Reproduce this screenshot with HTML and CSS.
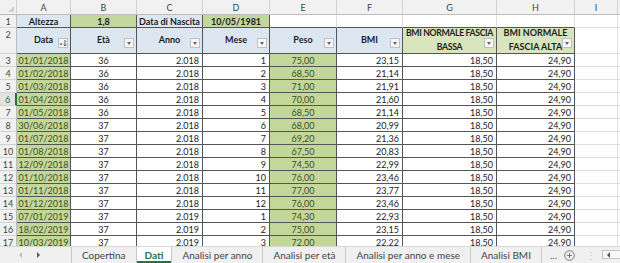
FILE: index.html
```html
<!DOCTYPE html>
<html lang="it">
<head>
<meta charset="utf-8">
<title>Dati</title>
<link rel="stylesheet" href="styles.css">
</head>
<body>
<div class="app">
  <div class="sheet">
    <div class="grid">
      <div class="ch corner"></div><div class="ch">A</div><div class="ch">B</div><div class="ch">C</div><div class="ch">D</div><div class="ch">E</div><div class="ch">F</div><div class="ch">G</div><div class="ch">H</div><div class="ch">I</div><div class="ch"></div>

      <div class="rh">1</div><div class="t bl b c">Altezza</div><div class="t gf b c">1,8</div><div class="t bl b c">Data di Nascita</div><div class="t gf b c">10/05/1981</div><div class="e db"></div><div class="e db"></div><div class="e db"></div><div class="e db"></div><div class="e"></div><div class="e"></div>

      <div class="rh">2</div>
      <div class="t bl hd">Data<span class="fb"><svg width="8" height="8" viewBox="0 0 8 8"><path d="M0.5 4.5h3l-1.5 2z" fill="#555"/><path d="M6 1v6M4.6 5.4L6 7l1.4-1.6" stroke="#555" stroke-width="1" fill="none"/></svg></span></div>
      <div class="t bl hd">Età<span class="fb"><i class="tri"></i></span></div>
      <div class="t bl hd">Anno<span class="fb"><i class="tri"></i></span></div>
      <div class="t bl hd">Mese<span class="fb"><i class="tri"></i></span></div>
      <div class="t bl hd">Peso<span class="fb"><i class="tri"></i></span></div>
      <div class="t bl hd">BMI<span class="fb"><i class="tri"></i></span></div>
      <div class="t lg hd tight">BMI NORMALE FASCIA<br>BASSA<span class="fb"><i class="tri"></i></span></div>
      <div class="t lg hd">BMI NORMALE<br>FASCIA ALTA<span class="fb"><i class="tri"></i></span></div>
      <div class="e"></div><div class="e"></div>

      <div class="rh">3</div><div class="t c g">01/01/2018</div><div class="t c">36</div><div class="t r">2.018</div><div class="t r">1</div><div class="t c g">75,00</div><div class="t r">23,15</div><div class="t r">18,50</div><div class="t r">24,90</div><div class="e"></div><div class="e"></div>
      <div class="rh">4</div><div class="t c g">01/02/2018</div><div class="t c">36</div><div class="t r">2.018</div><div class="t r">2</div><div class="t c g">68,50</div><div class="t r">21,14</div><div class="t r">18,50</div><div class="t r">24,90</div><div class="e"></div><div class="e"></div>
      <div class="rh">5</div><div class="t c g">01/03/2018</div><div class="t c">36</div><div class="t r">2.018</div><div class="t r">3</div><div class="t c g">71,00</div><div class="t r">21,91</div><div class="t r">18,50</div><div class="t r">24,90</div><div class="e"></div><div class="e"></div>
      <div class="rh sel">6</div><div class="t c g">01/04/2018</div><div class="t c">36</div><div class="t r">2.018</div><div class="t r">4</div><div class="t c g">70,00</div><div class="t r">21,60</div><div class="t r">18,50</div><div class="t r">24,90</div><div class="e"></div><div class="e active"></div>
      <div class="rh">7</div><div class="t c g">01/05/2018</div><div class="t c">36</div><div class="t r">2.018</div><div class="t r">5</div><div class="t c g">68,50</div><div class="t r">21,14</div><div class="t r">18,50</div><div class="t r">24,90</div><div class="e"></div><div class="e"></div>
      <div class="rh">8</div><div class="t c g">30/06/2018</div><div class="t c">37</div><div class="t r">2.018</div><div class="t r">6</div><div class="t c g">68,00</div><div class="t r">20,99</div><div class="t r">18,50</div><div class="t r">24,90</div><div class="e"></div><div class="e"></div>
      <div class="rh">9</div><div class="t c g">01/07/2018</div><div class="t c">37</div><div class="t r">2.018</div><div class="t r">7</div><div class="t c g">69,20</div><div class="t r">21,36</div><div class="t r">18,50</div><div class="t r">24,90</div><div class="e"></div><div class="e"></div>
      <div class="rh">10</div><div class="t c g">01/08/2018</div><div class="t c">37</div><div class="t r">2.018</div><div class="t r">8</div><div class="t c g">67,50</div><div class="t r">20,83</div><div class="t r">18,50</div><div class="t r">24,90</div><div class="e"></div><div class="e"></div>
      <div class="rh">11</div><div class="t c g">12/09/2018</div><div class="t c">37</div><div class="t r">2.018</div><div class="t r">9</div><div class="t c g">74,50</div><div class="t r">22,99</div><div class="t r">18,50</div><div class="t r">24,90</div><div class="e"></div><div class="e"></div>
      <div class="rh">12</div><div class="t c g">01/10/2018</div><div class="t c">37</div><div class="t r">2.018</div><div class="t r">10</div><div class="t c g">76,00</div><div class="t r">23,46</div><div class="t r">18,50</div><div class="t r">24,90</div><div class="e"></div><div class="e"></div>
      <div class="rh">13</div><div class="t c g">01/11/2018</div><div class="t c">37</div><div class="t r">2.018</div><div class="t r">11</div><div class="t c g">77,00</div><div class="t r">23,77</div><div class="t r">18,50</div><div class="t r">24,90</div><div class="e"></div><div class="e"></div>
      <div class="rh">14</div><div class="t c g">01/12/2018</div><div class="t c">37</div><div class="t r">2.018</div><div class="t r">12</div><div class="t c g">76,00</div><div class="t r">23,46</div><div class="t r">18,50</div><div class="t r">24,90</div><div class="e"></div><div class="e"></div>
      <div class="rh">15</div><div class="t c g">07/01/2019</div><div class="t c">37</div><div class="t r">2.019</div><div class="t r">1</div><div class="t c g">74,30</div><div class="t r">22,93</div><div class="t r">18,50</div><div class="t r">24,90</div><div class="e"></div><div class="e"></div>
      <div class="rh">16</div><div class="t c g">18/02/2019</div><div class="t c">37</div><div class="t r">2.019</div><div class="t r">2</div><div class="t c g">75,00</div><div class="t r">23,15</div><div class="t r">18,50</div><div class="t r">24,90</div><div class="e"></div><div class="e"></div>
      <div class="rh">17</div><div class="t c g">10/03/2019</div><div class="t c">37</div><div class="t r">2.019</div><div class="t r">3</div><div class="t c g">72,00</div><div class="t r">22,22</div><div class="t r">18,50</div><div class="t r">24,90</div><div class="e"></div><div class="e"></div>
    </div>
  </div>
  <div class="tabbar">
    <div class="nav"><span class="arr left"></span><span class="arr right"></span></div>
    <div class="tabs">
      <div class="tab">Copertina</div>
      <div class="tab on">Dati</div>
      <div class="tab">Analisi per anno</div>
      <div class="tab">Analisi per età</div>
      <div class="tab">Analisi per anno e mese</div>
      <div class="tab">Analisi BMI</div>
    </div>
    <div class="more">...</div>
    <div class="add"><svg width="11" height="11" viewBox="0 0 11 11"><circle cx="5.5" cy="5.5" r="4.8" fill="none" stroke="#777" stroke-width="1"/><path d="M5.5 3v5M3 5.5h5" stroke="#777" stroke-width="1"/></svg></div>
    <div class="split">⋮</div>
    <div class="hscroll"><span class="arr left dark"></span></div>
  </div>
</div>
</body>
</html>
```
FILE: styles.css
```css
body {
  margin: 0;
  font-family: Lato, "Liberation Sans", sans-serif;
  background: #fff;
}
.app {
  width: 620px;
  height: 263px;
  overflow: hidden;
  display: flex;
  flex-direction: column;
}
.sheet {
  height: 246px;
  overflow: hidden;
  flex: none;
}
.grid {
  display: grid;
  grid-template-columns: 17px 54px 66px 66px 67px 67px 66px 94px 78px 43px 40px;
  grid-template-rows: 15px 13px 26px;
  grid-auto-rows: 13px;
  width: 658px;
  font-size: 9px;
  color: #222;
}
.grid > div {
  box-sizing: border-box;
  border-right: 1px solid #dedede;
  border-bottom: 1px solid #dedede;
  overflow: hidden;
  white-space: nowrap;
  line-height: 13px;
  position: relative;
}
.grid > .ch {
  background: #f1f1f1;
  border-right-color: #d2d2d2;
  border-bottom-color: #bcbcbc;
  text-align: center;
  color: #444;
  line-height: 15px;
}
.corner::after {
  content: "";
  position: absolute;
  right: 2px;
  bottom: 2px;
  border-left: 6px solid transparent;
  border-bottom: 6px solid #d0d0d0;
}
.grid > .rh {
  background: #f1f1f1;
  border-right-color: #bcbcbc;
  border-bottom-color: #d2d2d2;
  text-align: center;
  color: #444;
}
.grid > .rh.sel {
  background: #e2e2e2;
  color: #217346;
  border-right: 2px solid #217346;
}
.grid > .t {
  border-right-color: #555;
  border-bottom-color: #555;
}
.grid > .db {
  border-bottom-color: #555;
}
.c { text-align: center; }
.r { text-align: right; padding-right: 3px; }
.b { font-weight: 700; color: #1e1e1e; }
.bl { background: #dce6f1; }
.gf { background: #c4d79b; }
.g { background: #c4d79b; color: #3a5222; }
.lg { background: #d8e4bc; }
.grid > .hd {
  display: flex;
  align-items: center;
  justify-content: center;
  text-align: center;
  white-space: nowrap;
  line-height: 14px;
  font-weight: 700;
  color: #1e1e1e;
  padding: 0 0 1px;
}
.grid > .tight {
  letter-spacing: -0.35px;
  font-size: 8.7px;
}
.fb {
  position: absolute;
  right: 2px;
  bottom: 5px;
  width: 10px;
  height: 10px;
  box-sizing: border-box;
  background: #f6f6f6;
  border: 1px solid #c2c2c2;
  display: flex;
  align-items: center;
  justify-content: center;
}
.tri {
  display: block;
  width: 0;
  height: 0;
  border-left: 2.5px solid transparent;
  border-right: 2.5px solid transparent;
  border-top: 3px solid #666;
  margin-top: 1px;
}
.active::after {
  content: "";
  position: absolute;
  left: -2px;
  top: -2px;
  width: 30px;
  height: 14px;
  border: 2px solid #217346;
}
.tabbar {
  flex: none;
  height: 17px;
  display: flex;
  align-items: stretch;
  background: #f0f0f0;
  border-top: 1px solid #d8d8d8;
  box-sizing: border-box;
  font-size: 10px;
  color: #444;
}
.tabbar > div {
  flex: none;
}
.nav {
  width: 71px;
  display: flex;
  align-items: center;
  gap: 15px;
  padding-left: 19px;
  box-sizing: border-box;
}
.arr {
  display: block;
  width: 0;
  height: 0;
  border-top: 3px solid transparent;
  border-bottom: 3px solid transparent;
}
.arr.left { border-right: 3px solid #bbb; }
.arr.right { border-left: 3px solid #555; }
.arr.left.dark { border-right-color: #555; }
.tabs {
  display: flex;
  border-left: 1px solid #c8c8c8;
}
.tab {
  padding: 0 10px;
  display: flex;
  align-items: center;
  border-right: 1px solid #c8c8c8;
  white-space: nowrap;
}
.tab.on {
  background: #fff;
  color: #217346;
  font-weight: 700;
  box-shadow: inset 0 -2px 0 #217346;
  padding: 0 8px;
}
.more {
  margin-left: 8px;
  display: flex;
  align-items: center;
  color: #555;
}
.add {
  margin-left: 7px;
  display: flex;
  align-items: center;
}
.split {
  margin-left: 11px;
  display: flex;
  align-items: center;
  color: #bbb;
}
.hscroll {
  margin-left: 6px;
  margin-top: 3px;
  height: 9px;
  width: 20px;
  border: 1px solid #c4c4c4;
  background: #f8f8f8;
  display: flex;
  align-items: center;
  padding-left: 4px;
  box-sizing: border-box;
}
```
